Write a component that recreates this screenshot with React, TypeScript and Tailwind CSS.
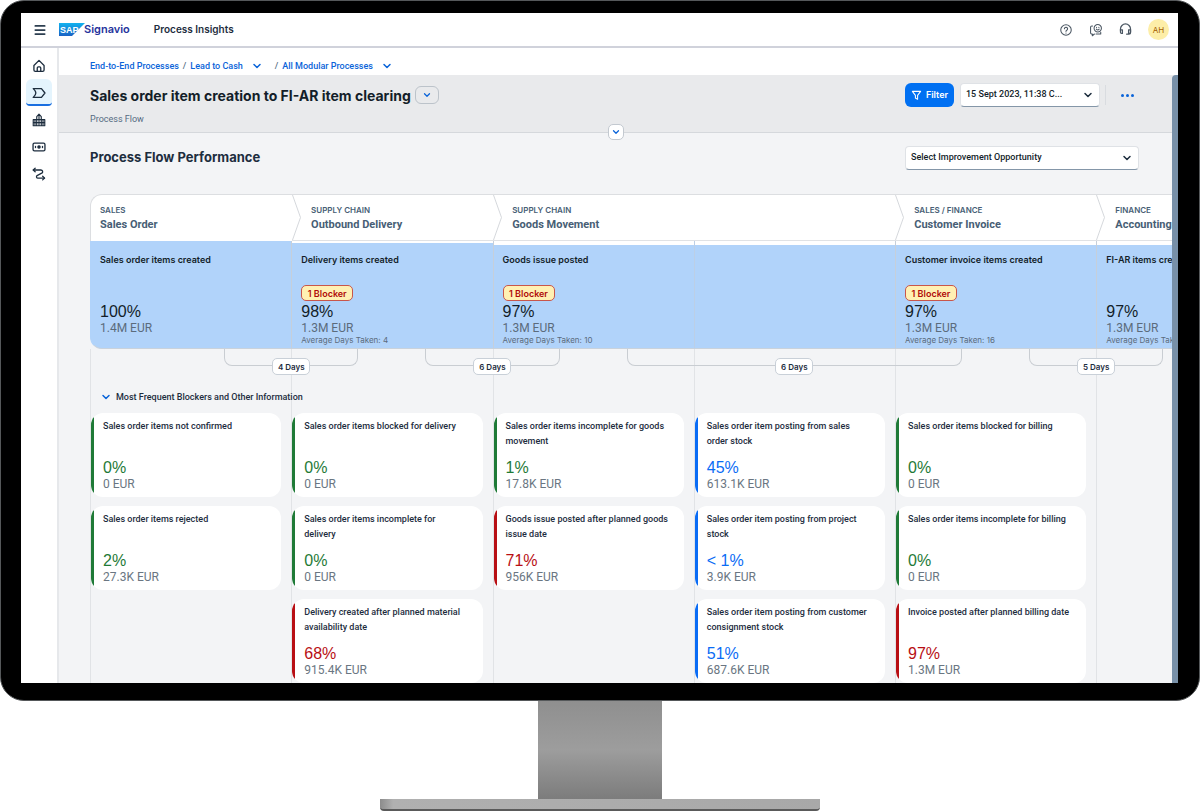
import { type ReactNode } from "react";
import { ChevronDown, Menu } from "lucide-react";
import clsx from "clsx";

type Tone = "good" | "bad" | "info";
type Metric = { title: string; share: string; value: string; tone: Tone };

const stages = [
  { area: "SALES", name: "Sales Order", span: "col-span-1" },
  { area: "SUPPLY CHAIN", name: "Outbound Delivery", span: "col-span-1" },
  { area: "SUPPLY CHAIN", name: "Goods Movement", span: "col-span-2" },
  { area: "SALES / FINANCE", name: "Customer Invoice", span: "col-span-1" },
  { area: "FINANCE", name: "Accounting", span: "col-span-1" }
];

const steps = [
  { title: "Sales order items created", share: "100%", value: "1.4M EUR", look: "rounded-bl-xl border-l-[#b1d3fa]" },
  { title: "Delivery items created", blocker: true, share: "98%", value: "1.3M EUR", days: "4", look: "border-l-[#c6cfda] shadow-[inset_0_2px_0_#fff]" },
  { title: "Goods issue posted", blocker: true, share: "97%", value: "1.3M EUR", days: "10", look: "border-l-[#c6cfda] shadow-[inset_0_4px_0_#fff]" },
  { look: "border-l-[#bccfe6] shadow-[inset_0_4px_0_#fff]" },
  { title: "Customer invoice items created", blocker: true, share: "97%", value: "1.3M EUR", days: "16", look: "border-l-[#c6cfda] shadow-[inset_0_4px_0_#fff]" },
  { title: "FI-AR items created", share: "97%", value: "1.3M EUR", days: "22", look: "border-l-[#c6cfda] shadow-[inset_0_4px_0_#fff]" }
];

// Each connector runs from two thirds of one step to one third of the next
const connectors = [
  { label: "4 Days", place: "col-start-3 col-span-2" },
  { label: "6 Days", place: "col-start-6 col-span-2" },
  { label: "6 Days", place: "col-start-9 col-span-5" },
  { label: "5 Days", place: "col-start-15 col-span-2" }
];

const columns: Metric[][] = [
  [
    { title: "Sales order items not confirmed", share: "0%", value: "0 EUR", tone: "good" },
    { title: "Sales order items rejected", share: "2%", value: "27.3K EUR", tone: "good" }
  ],
  [
    { title: "Sales order items blocked for delivery", share: "0%", value: "0 EUR", tone: "good" },
    { title: "Sales order items incomplete for\ndelivery", share: "0%", value: "0 EUR", tone: "good" },
    { title: "Delivery created after planned material\navailability date", share: "68%", value: "915.4K EUR", tone: "bad" }
  ],
  [
    { title: "Sales order items incomplete for goods\nmovement", share: "1%", value: "17.8K EUR", tone: "good" },
    { title: "Goods issue posted after planned goods\nissue date", share: "71%", value: "956K EUR", tone: "bad" }
  ],
  [
    { title: "Sales order item posting from sales\norder stock", share: "45%", value: "613.1K EUR", tone: "info" },
    { title: "Sales order item posting from project\nstock", share: "< 1%", value: "3.9K EUR", tone: "info" },
    { title: "Sales order item posting from customer\nconsignment stock", share: "51%", value: "687.6K EUR", tone: "info" }
  ],
  [
    { title: "Sales order items blocked for billing", share: "0%", value: "0 EUR", tone: "good" },
    { title: "Sales order items incomplete for billing", share: "0%", value: "0 EUR", tone: "good" },
    { title: "Invoice posted after planned billing date", share: "97%", value: "1.3M EUR", tone: "bad" }
  ]
];

const barTone = { good: "bg-[#1f7a37]", bad: "bg-[#b80f14]", info: "bg-[#0a6cf5]" };
const textTone = { good: "text-[#1f7a37]", bad: "text-[#b80f14]", info: "text-[#0a6cf5]" };

const flowGrid = "grid grid-cols-[repeat(6,18.6%)]";
const bodyText = "font-[Roboto,sans-serif] text-[9px] font-medium";

function Glyph({ children, size = "size-[14px]" }: { children: ReactNode; size?: string }) {
  return (
    <svg
      viewBox="0 0 16 16"
      className={clsx(size, "shrink-0")}
      fill="none"
      stroke="currentColor"
      strokeWidth="1.5"
      strokeLinecap="round"
      strokeLinejoin="round"
      aria-hidden="true"
    >
      {children}
    </svg>
  );
}

const nav = [
  {
    label: "Home",
    icon: (
      <>
        <path d="M2.2 7.4 8 1.6l5.8 5.8v5.2a1.6 1.6 0 0 1-1.6 1.6H3.8a1.6 1.6 0 0 1-1.6-1.6z" />
        <path d="M6 14v-3.800A1.2 1.2 0 0 1 7.2 9h1.6a1.2 1.2 0 0 1 1.2 1.200V14" />
      </>
    )
  },
  { label: "Process flows", active: true, icon: <path d="M1.4 3h9.4l4 5-4 5H1.400C3.600 11 4.400 9.600 4.400 8S3.600 5 1.400 3z" /> },
  {
    label: "Organisation",
    icon: (
      <path
        strokeWidth="1.3"
        d="M5.400 14.600V4.200L8 1.400l2.600 2.800v10.400M1.400 14.600v-7h4M10.600 7.600h4v7M1.400 14.600h13.200M1.400 11h13.200M5.400 7.600h5.200M8 1.400v13.200M3.400 7.600v7M12.600 7.600v7"
      />
    )
  },
  {
    label: "Value",
    icon: (
      <>
        <rect x="1.2" y="3.6" width="13.6" height="8.8" rx="1.6" />
        <circle cx="8" cy="8" r="1.3" fill="currentColor" />
        <path d="M4 7.300v1.400M12 7.300v1.400" />
      </>
    )
  },
  {
    label: "Variants",
    icon: (
      <>
        <path d="M1.600 3.400h8.600a2 2 0 0 1 1.400 3.400L5.800 9.800a1.600 1.600 0 0 0 1 2.900h7.400" />
        <path d="M3.600 1.400l-2.200 2 2.200 2M12.200 10.600l2.200 2.100-2.200 2" />
      </>
    )
  }
];

function Logo() {
  return (
    <a href="#" className="flex items-center text-[11px] font-semibold text-[#26349c]">
      <svg viewBox="0 0 26 13" className="-mr-px h-[13px] w-[26px]" role="img" aria-label="SAP">
        <defs>
          <linearGradient id="sap" x1="0" y1="0" x2="0" y2="1">
            <stop offset="0" stopColor="#12b2ef" />
            <stop offset="1" stopColor="#1a62c4" />
          </linearGradient>
        </defs>
        <path d="M0 0h26L13 13H0z" fill="url(#sap)" />
        <text x="1" y="10" fontSize="9" fontWeight="700" fill="#fff" fontFamily="Liberation Sans, sans-serif">SAP</text>
      </svg>
      Signavio
    </a>
  );
}

function TopBar() {
  return (
    <header className="flex h-[35px] items-center border-b-2 border-[#d0d2db] bg-white">
      <button aria-label="Menu" className="mx-3 text-[#2c3e50]">
        <Menu className="size-[14px]" strokeWidth={3} />
      </button>
      <Logo />
      <span className="ml-6 text-[10px] font-semibold text-[#1d2d3e]">Process Insights</span>
      <div className="ml-auto mr-[9px] flex items-center gap-4 text-[#4a5662]">
        <button aria-label="Help">
          <Glyph size="size-[14px]">
            <circle cx="8" cy="8" r="6" strokeWidth="1.2" />
            <path d="M6.200 6.600a1.800 1.800 0 1 1 2.700 1.600c-.6.300-.9.700-.9 1.300M8 11.400v.1" strokeWidth="1.3" />
          </Glyph>
        </button>
        <button aria-label="Feedback">
          <Glyph size="size-[14px]">
            <path d="M4 3.400H3.200A1.400 1.400 0 0 0 1.800 4.800v6.400a1.400 1.400 0 0 0 1.400 1.400h.6v2l2.400-2M8 12.600h5.400V10.600" strokeWidth="1.2" />
            <circle cx="10" cy="6" r="4.200" strokeWidth="1.2" />
            <path d="M8.400 7c.9 1.200 2.300 1.200 3.200 0M8.700 4.900v.1M11.300 4.900v.1" strokeWidth="1.2" />
          </Glyph>
        </button>
        <button aria-label="Support">
          <Glyph size="size-[13px]">
            <path d="M1.800 9V7.400a6.200 6.200 0 0 1 12.400 0v4.400a2 2 0 0 1-2 2H9.400" />
            <path d="M1.800 8.400h2.400v4.400h-1a1.400 1.400 0 0 1-1.400-1.400zM14.200 8.400h-2.400v4.400h1a1.400 1.400 0 0 0 1.400-1.400z" />
          </Glyph>
        </button>
        <button className="size-[21px] rounded-full bg-[#fdeea8] text-[8px] text-[#a45d00]">AH</button>
      </div>
    </header>
  );
}

function Sidebar() {
  return (
    <nav className="flex w-[38px] shrink-0 flex-col items-center border-r-2 border-[#e6e8eb] bg-white pt-1">
      {nav.map((item) => (
        <a
          key={item.label}
          href="#"
          aria-label={item.label}
          className={clsx(
            "flex h-[27px] w-[26px] items-center justify-center border-y-2 border-t-transparent text-[#1d2d3e]",
            item.active ? "rounded-t-md rounded-b-sm border-b-[#1a6fe0] bg-[#e4f4fd]" : "border-b-transparent"
          )}
        >
          <Glyph>{item.icon}</Glyph>
        </a>
      ))}
    </nav>
  );
}

function Breadcrumb() {
  return (
    <nav aria-label="Breadcrumb" className={clsx(bodyText, "flex h-[27px] items-end bg-white pb-[3px] pl-[31px] leading-3 text-[#0a64d9]")}>
      <a href="#">End-to-End Processes</a>
      <span className="mx-1 text-[#556b82]">/</span>
      <a href="#">Lead to Cash</a>
      <ChevronDown className="mx-2 size-3" strokeWidth={3} />
      <span className="mx-1 text-[#556b82]">/</span>
      <a href="#">All Modular Processes</a>
      <ChevronDown className="mx-2 size-3" strokeWidth={3} />
    </nav>
  );
}

function Picker({ label, value, width }: { label: string; value: string; width: string }) {
  return (
    <div className={clsx("relative h-6", width)}>
      <select
        aria-label={label}
        className={clsx(
          bodyText,
          "block h-6 w-full appearance-none rounded-sm border border-[#dfe2e6] border-b-[#8496a8] bg-white pl-[5px] text-[#131e29]"
        )}
      >
        <option>{value}</option>
      </select>
      <ChevronDown className="pointer-events-none absolute right-[6px] top-[6px] size-3 text-[#1d2d3e]" strokeWidth={3} />
    </div>
  );
}

function PageHeader() {
  return (
    <div className="relative border-b border-[#d5d8dc] bg-[#e9eaec] pb-[7px] pl-[31px] pr-[33px] pt-2">
      <div className="flex h-6 items-center">
        <h1 className="text-[14px] font-bold text-[#131e29]">Sales order item creation to FI-AR item clearing</h1>
        <button aria-label="Switch flow" className="ml-1 flex h-[18px] w-6 items-center justify-center rounded-md border border-[#bcc3ca] text-[#0a64d9]">
          <ChevronDown className="size-[10px]" strokeWidth={3} />
        </button>
        <button className="ml-auto flex h-6 w-[49px] items-center justify-center gap-1 rounded-md bg-[#0070f2] text-[9px] font-semibold text-white">
          <Glyph size="size-[11px]">
            <path d="M2 2h12L9.600 7.800v5.800L6.400 11.600V7.800z" />
          </Glyph>
          Filter
        </button>
        <div className="ml-[6px]">
          <Picker label="Snapshot" value="15 Sept 2023, 11:38 C..." width="w-[140px]" />
        </div>
        <span className="ml-[5px] h-5 w-px bg-[#d9dce0]" />
        <button aria-label="More" className="ml-[15px] mr-[5px] flex gap-[2px]">
          <i className="size-[3px] rounded-full bg-[#0a64d9]" />
          <i className="size-[3px] rounded-full bg-[#0a64d9]" />
          <i className="size-[3px] rounded-full bg-[#0a64d9]" />
        </button>
      </div>
      <p className="mt-[6px] font-[Roboto,sans-serif] text-[9px] leading-3 text-[#556b82]">Process Flow</p>
      <button
        aria-label="Expand header"
        className="absolute -bottom-2 left-1/2 flex size-4 -translate-x-1/2 items-center justify-center rounded-[5px] border border-[#c3c9d0] bg-white text-[#0a64d9]"
      >
        <ChevronDown className="size-[10px]" strokeWidth={3} />
      </button>
    </div>
  );
}

function StageRow() {
  return (
    <div className={clsx(flowGrid, "h-[47px] rounded-tl-xl border-l border-t border-[#dcdee1] bg-white")}>
      {stages.map((stage, i) => (
        <div key={stage.name} className={clsx("flex overflow-hidden", stage.span, i > 0 && "border-b border-[#e0e2e5]")}>
          {i > 0 && (
            <svg viewBox="0 0 9 46" preserveAspectRatio="none" className="mr-px h-full w-[9px] shrink-0" aria-hidden="true">
              <path d="M0.500 0 8.500 23 0.500 46" fill="none" stroke="#d5d8dc" />
            </svg>
          )}
          <div className="pl-[9px] pt-[9px] text-[#475e75]">
            <p className="text-[8px] font-semibold leading-3">{stage.area}</p>
            <h3 className="mt-px font-[Roboto,sans-serif] text-[11px] font-bold leading-4">{stage.name}</h3>
          </div>
        </div>
      ))}
    </div>
  );
}

function StepRow() {
  return (
    <div className={flowGrid}>
      {steps.map((step, i) => (
        <div
          key={i}
          className={clsx("h-[108px] overflow-hidden whitespace-nowrap border-b border-l border-b-[#c9d2dc] bg-[#b1d3fa] pl-[9px] pt-[13px]", step.look)}
        >
          {step.title && (
            <>
              <h4 className="text-[9px] font-semibold leading-3 text-[#131e29]">{step.title}</h4>
              <div className="mt-[19px] h-4">
                {step.blocker && (
                  <button className="block h-4 w-[52px] rounded-[5px] border border-[#c8564b] bg-[#fff0b3] text-[9px] font-semibold leading-none text-[#b00a0a]">
                    1 Blocker
                  </button>
                )}
              </div>
              <p className="mt-[3px] font-[Liberation_Sans,sans-serif] text-[16px] leading-4 text-[#131e29]">{step.share}</p>
              <p className="font-[Roboto,sans-serif] text-[12px] leading-4 text-[#5b6b7c]">{step.value}</p>
              {step.days && <p className="text-[8px] leading-[8px] text-[#5b6b7c]">Average Days Taken: {step.days}</p>}
            </>
          )}
        </div>
      ))}
    </div>
  );
}

function Connectors() {
  return (
    <div className="grid h-[17px] grid-cols-[repeat(18,6.2%)]">
      {connectors.map((c) => (
        <div key={c.place} className={clsx("row-start-1 flex h-[17px] justify-center rounded-b-lg border-x border-b border-[#c9cdd2]", c.place)}>
          <span className="mt-[9px] flex h-[17px] w-[38px] shrink-0 items-center justify-center rounded-[5px] border border-[#c9d0d8] bg-white text-[8px] font-semibold text-[#1d2d3e]">
            {c.label}
          </span>
        </div>
      ))}
    </div>
  );
}

function MetricCard({ title, share, value, tone }: Metric) {
  return (
    <article className="ml-px mr-[10px] flex overflow-hidden rounded-xl bg-white">
      <span className={clsx("w-[3px] shrink-0", barTone[tone])} />
      <div className="pb-[5px] pl-[9px] pt-[6px]">
        <h4 className={clsx(bodyText, "h-[30px] whitespace-pre leading-[15px] text-[#1d2d3e]")}>{title}</h4>
        <p className={clsx("mt-[11px] font-[Liberation_Sans,sans-serif] text-[16px] leading-4", textTone[tone])}>{share}</p>
        <p className="font-[Roboto,sans-serif] text-[12px] leading-4 text-[#6a7682]">{value}</p>
      </div>
    </article>
  );
}

function ProcessFlow() {
  return (
    <section className="mt-6 overflow-hidden pl-[31px]">
      <StageRow />
      <StepRow />
      <div className="grid">
        <div className={clsx(flowGrid, "[grid-area:1/1]")}>
          {steps.map((_, i) => (
            <span key={i} className="border-l border-[#e1e3e6]" />
          ))}
        </div>
        <div className="[grid-area:1/1]">
          <Connectors />
          <button aria-expanded="true" className={clsx(bodyText, "ml-[10px] mt-[25px] flex h-3 items-center gap-1 leading-3 text-[#1d2d3e]")}>
            <ChevronDown className="size-3 text-[#0a64d9]" strokeWidth={3} />
            Most Frequent Blockers and Other Information
          </button>
          <div className={clsx(flowGrid, "mt-[10px]")}>
            {columns.map((cards, i) => (
              <div key={i} className="flex flex-col gap-[9px]">
                {cards.map((card) => (
                  <MetricCard key={card.title} {...card} />
                ))}
              </div>
            ))}
          </div>
        </div>
      </div>
    </section>
  );
}

export default function App() {
  return (
    <div className="overflow-hidden bg-white font-[Inter,sans-serif]">
      <div className="rounded-[24px] border border-[#55585a] bg-black pb-[17px] pl-5 pr-[21px] pt-3">
        <div className="bg-[#f3f4f6]">
          <TopBar />
          <div className="flex">
            <Sidebar />
            <main className="min-w-0 flex-1">
              <Breadcrumb />
              <div className="flex bg-[#e9eaec]">
                <div className="min-w-0 flex-1 bg-[#f3f4f6]">
                  <PageHeader />
                  <div className="mt-[13px] flex h-6 items-center justify-between pl-[31px] pr-[33px]">
                    <h2 className="text-[13px] font-bold text-[#1d2d3e]">Process Flow Performance</h2>
                    <Picker label="Improvement opportunity" value="Select Improvement Opportunity" width="w-[234px]" />
                  </div>
                  <ProcessFlow />
                </div>
                <div className="w-[6px] shrink-0 rounded-tl bg-[#7890a8]" />
              </div>
            </main>
          </div>
        </div>
      </div>

      {/* Stand */}
      <div className="mx-auto h-[98px] w-[124px] bg-linear-to-b from-[#8f8f8f] via-[#9d9d9d] via-50% to-[#7c7c7c]" />
      <div className="mx-auto h-3 w-[440px] rounded-b-sm border-b-2 border-[#5a5a5a] bg-linear-to-r from-[#8c8c8c] via-[#b0b0b0] via-3% to-[#a8a8a8]" />
    </div>
  );
}
